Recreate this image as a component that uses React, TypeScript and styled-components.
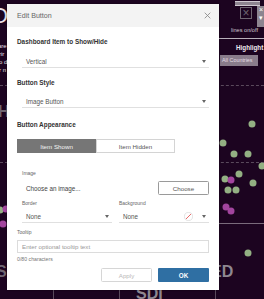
import React from "react";
import styled, { createGlobalStyle } from "styled-components";

const Global = createGlobalStyle`
  html, body { margin: 0; padding: 0; background: #1c0420; }
  body { font-family: "Liberation Sans", Arial, sans-serif; }
  * { box-sizing: border-box; }
`;

const Stage = styled.div`
  position: relative;
  width: 264px;
  height: 299px;
  overflow: hidden;
  background: #1c0420;
`;

const Dot = styled.div<{ $c: "g" | "p" }>`
  position: absolute;
  width: 7px;
  height: 7px;
  border-radius: 50%;
  background: ${(p) => (p.$c === "g" ? "#93b083" : "#a2459e")};
  transform: translate(-50%, -50%);
`;

const HLine = styled.div<{ $dashed?: boolean; $c?: string }>`
  position: absolute;
  height: 0;
  border-top: 1px ${(p) => (p.$dashed ? "dashed" : "solid")} ${(p) => p.$c || "#5a4a5c"};
`;

const VLine = styled.div`
  position: absolute;
  width: 0;
  border-left: 1px solid #5a4a5c;
`;

const BgText = styled.div<{ $size: number; $c: string; $bold?: boolean }>`
  position: absolute;
  font-size: ${(p) => p.$size}px;
  color: ${(p) => p.$c};
  font-weight: ${(p) => (p.$bold ? 700 : 400)};
  white-space: nowrap;
  line-height: 1;
`;

const Widget = styled.div`
  position: absolute;
  left: 235px;
  top: 0;
  width: 29px;
  height: 28px;
`;

const WidgetBar = styled.div`
  position: absolute;
  left: 0;
  top: 1px;
  width: 25px;
  height: 5px;
  background: #8d8590;
  border-top: 1px solid #cfc8d0;
  border-bottom: 1px solid #cfc8d0;
`;

const WidgetBox = styled.div`
  position: absolute;
  left: 5px;
  top: 7px;
  width: 12px;
  height: 12px;
  border: 1px solid #6d6470;
  color: #6d6470;
  font-size: 12px;
  line-height: 10px;
  text-align: center;
`;

const WidgetSide = styled.div`
  position: absolute;
  left: 22px;
  top: 6px;
  width: 8px;
  height: 21px;
  background: #8d8590;
  color: #fff;
  font-size: 7px;
  line-height: 8px;
  text-align: center;
`;

const Pill = styled.div`
  position: absolute;
  left: 220px;
  top: 55px;
  width: 38px;
  height: 11px;
  background: #897c8b;
  color: #e4dde5;
  font-size: 5.4px;
  line-height: 11px;
  padding-left: 2px;
  white-space: nowrap;
`;

const Dialog = styled.div`
  position: absolute;
  left: 7px;
  top: 4px;
  width: 212px;
  height: 286px;
  background: #fff;
  display: flex;
  flex-direction: column;
  box-shadow: 0 0 2px rgba(0, 0, 0, 0.4);
`;

const Header = styled.div`
  flex: none;
  height: 23px;
  background: #f3f3f3;
  display: flex;
  align-items: center;
  justify-content: space-between;
  padding: 0 8px 0 10px;
  color: #666;
  font-size: 7.1px;
`;

const CloseIcon = styled.svg`
  width: 7px;
  height: 7px;
`;

const Body = styled.div`
  display: flex;
  flex-direction: column;
  padding: 0 10px;
`;

const SectionTitle = styled.div<{ $mt: number }>`
  flex: none;
  margin-top: ${(p) => p.$mt}px;
  font-size: 6.4px;
  font-weight: 700;
  color: #333;
  height: 8px;
  line-height: 8px;
`;

const SelectRow = styled.div<{ $mt: number; $ml?: number }>`
  flex: none;
  margin-top: ${(p) => p.$mt}px;
  margin-left: ${(p) => p.$ml ?? 5}px;
  height: 13px;
  border-bottom: 1px solid #e0e0e0;
  display: flex;
  align-items: center;
  gap: 4px;
  padding: 0 3px 0 4px;
  font-size: 6.3px;
  color: #555;
`;

const SelectText = styled.span`
  flex: 1;
`;

const Caret = styled.span`
  width: 0;
  height: 0;
  border-left: 2.5px solid transparent;
  border-right: 2.5px solid transparent;
  border-top: 3px solid #666;
`;

const Tabs = styled.div`
  flex: none;
  margin-top: 10px;
  display: flex;
  height: 14px;
  width: 158px;
`;

const Tab = styled.div<{ $active?: boolean }>`
  flex: 1;
  display: flex;
  align-items: center;
  justify-content: center;
  font-size: 6.2px;
  background: ${(p) => (p.$active ? "#767676" : "#fff")};
  color: ${(p) => (p.$active ? "#f4f4f4" : "#555")};
  border: 1px solid ${(p) => (p.$active ? "#767676" : "#d4d4d4")};
`;

const SmallLabel = styled.div<{ $mt: number; $ml?: number }>`
  flex: none;
  margin-top: ${(p) => p.$mt}px;
  margin-left: ${(p) => p.$ml ?? 5}px;
  font-size: 5px;
  color: #666;
  height: 6px;
  line-height: 6px;
`;

const ImageRow = styled.div`
  flex: none;
  margin-top: 5px;
  margin-left: 5px;
  display: flex;
  align-items: center;
  justify-content: space-between;
  height: 14px;
  padding-left: 4px;
  font-size: 6.3px;
  color: #444;
`;

const OutlineButton = styled.div<{ $w: number; $disabled?: boolean }>`
  width: ${(p) => p.$w}px;
  height: 14px;
  border: 1px solid ${(p) => (p.$disabled ? "#d6d6d6" : "#9a9a9a")};
  border-radius: 1.5px;
  display: flex;
  align-items: center;
  justify-content: center;
  font-size: 6.2px;
  color: ${(p) => (p.$disabled ? "#b8b8b8" : "#555")};
  background: #fff;
`;

const TwoCol = styled.div`
  flex: none;
  display: grid;
  grid-template-columns: 95px 90px;
  column-gap: 7px;
`;

const Col = styled.div`
  display: flex;
  flex-direction: column;
`;

const NoColor = styled.svg`
  width: 9px;
  height: 9px;
  margin-right: 5px;
`;

const Input = styled.div`
  flex: none;
  margin-top: 5px;
  height: 13px;
  border: 1px solid #dcdcdc;
  display: flex;
  align-items: center;
  padding-left: 4px;
  font-size: 6.2px;
  color: #999;
`;

const Counter = styled.div`
  flex: none;
  margin-top: 3px;
  font-size: 5.2px;
  color: #777;
  height: 6px;
  line-height: 6px;
`;

const Footer = styled.div`
  flex: none;
  margin-top: 6px;
  display: flex;
  justify-content: flex-end;
  gap: 6px;
`;

const PrimaryButton = styled.div`
  width: 51px;
  height: 14px;
  background: #2f6fa3;
  color: #fff;
  font-weight: 700;
  font-size: 6.3px;
  display: flex;
  align-items: center;
  justify-content: center;
  border-radius: 1px;
`;

const green: [number, number][] = [
  [252, 124], [223, 143], [234, 154], [248, 154], [262, 166], [225, 179],
  [239, 174], [253, 183], [228, 190], [236, 190], [248, 253], [0, 210],
];
const purple: [number, number][] = [
  [231, 180], [226, 207], [231, 211], [6, 209], [3, 224],
];

export default function App() {
  return (
    <Stage>
      <Global />
      <HLine $dashed style={{ left: 0, top: 85, width: 264 }} />
      <HLine $dashed style={{ left: 0, top: 162, width: 264 }} />
      <HLine $c="#7a6b7c" style={{ left: 219, top: 223, width: 45 }} />
      <HLine $c="#b8b0ba" style={{ left: 219, top: 38, width: 45 }} />
      <VLine style={{ left: 53, top: 286, height: 13 }} />
      <VLine style={{ left: 119, top: 286, height: 13 }} />
      <VLine style={{ left: 215, top: 286, height: 13 }} />
      <BgText $size={22} $c="#e8e0e8" style={{ left: -9, top: 5 }}>O</BgText>
      <BgText $size={6} $c="#e8e0e8" style={{ left: -2, top: 43 }}>are</BgText>
      <BgText $size={6} $c="#e8e0e8" style={{ left: -1, top: 51 }}>rir</BgText>
      <BgText $size={6} $c="#e8e0e8" style={{ left: -1, top: 59 }}>o d</BgText>
      <BgText $size={6} $c="#e8e0e8" style={{ left: -1, top: 67 }}>r n</BgText>
      <BgText $size={16} $c="#6f6672" $bold style={{ left: -2, top: 104 }}>H</BgText>
      <BgText $size={16} $c="#6f6672" $bold style={{ left: -4, top: 264 }}>S</BgText>
      <BgText $size={16} $c="#8e8791" $bold style={{ left: 211, top: 264 }}>ED</BgText>
      <BgText $size={16} $c="#8e8791" $bold style={{ left: 136, top: 286 }}>SDI</BgText>
      <BgText $size={5.6} $c="#cfc8d0" style={{ left: 231, top: 28 }}>lines on/off</BgText>
      <BgText $size={6.3} $c="#f0eaf0" $bold style={{ left: 236, top: 45 }}>Highlight</BgText>
      <Pill>All Countries</Pill>
      <Widget>
        <WidgetBar />
        <WidgetBox>×</WidgetBox>
        <WidgetSide>×<br />▾</WidgetSide>
      </Widget>
      {green.map(([x, y], i) => (
        <Dot key={"g" + i} $c="g" style={{ left: x, top: y }} />
      ))}
      {purple.map(([x, y], i) => (
        <Dot key={"p" + i} $c="p" style={{ left: x, top: y }} />
      ))}

      <Dialog>
        <Header>
          <span>Edit Button</span>
          <CloseIcon viewBox="0 0 10 10">
            <path d="M1 1L9 9M9 1L1 9" stroke="#888" strokeWidth="1.2" />
          </CloseIcon>
        </Header>
        <Body>
          <SectionTitle $mt={11}>Dashboard Item to Show/Hide</SectionTitle>
          <SelectRow $mt={9}>
            <SelectText>Vertical</SelectText>
            <Caret />
          </SelectRow>
          <SectionTitle $mt={11}>Button Style</SectionTitle>
          <SelectRow $mt={8}>
            <SelectText>Image Button</SelectText>
            <Caret />
          </SelectRow>
          <SectionTitle $mt={13}>Button Appearance</SectionTitle>
          <Tabs>
            <Tab $active>Item Shown</Tab>
            <Tab>Item Hidden</Tab>
          </Tabs>
          <SmallLabel $mt={17}>Image</SmallLabel>
          <ImageRow>
            <span>Choose an image...</span>
            <OutlineButton $w={51}>Choose</OutlineButton>
          </ImageRow>
          <TwoCol>
            <Col>
              <SmallLabel $mt={5}>Border</SmallLabel>
              <SelectRow $mt={4}>
                <SelectText>None</SelectText>
                <Caret />
              </SelectRow>
            </Col>
            <Col>
              <SmallLabel $mt={5} $ml={0}>Background</SmallLabel>
              <SelectRow $mt={4} $ml={0}>
                <SelectText>None</SelectText>
                <NoColor viewBox="0 0 10 10">
                  <circle cx="5" cy="5" r="4.5" fill="#fff" stroke="#ccc" strokeWidth="0.6" />
                  <path d="M2.2 7.8L7.8 2.2" stroke="#e03030" strokeWidth="0.8" />
                </NoColor>
                <Caret />
              </SelectRow>
            </Col>
          </TwoCol>
          <SmallLabel $mt={6} $ml={0}>Tooltip</SmallLabel>
          <Input>Enter optional tooltip text</Input>
          <Counter>0/80 characters</Counter>
          <Footer>
            <OutlineButton $w={51} $disabled>Apply</OutlineButton>
            <PrimaryButton>OK</PrimaryButton>
          </Footer>
        </Body>
      </Dialog>
    </Stage>
  );
}
